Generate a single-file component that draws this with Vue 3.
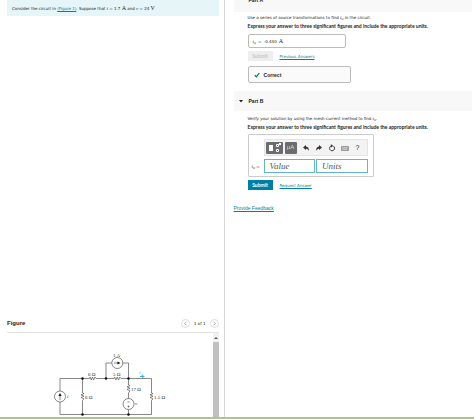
<script setup>
import { ref } from 'vue'

const value = ref('')
const units = ref('')
const open = ref(true)
</script>

<template>
  <div class="page">
    <div class="panes">
      <aside class="left">
        <p class="problem">
          Consider the circuit in <a href="#figure">(Figure 1)</a>. Suppose that <i class="m">i</i> = 1.7 <span class="m unit">A</span> and
          <i class="m">v</i> = 24 <span class="m unit">V</span>
        </p>
        <section id="figure" class="figure">
          <header class="figure-head">
            <h2>Figure</h2>
            <nav class="pager" aria-label="Figures">
              <button type="button" aria-label="Previous figure">
                <svg viewBox="0 0 8 8"><path d="M5 2 3 4l2 2" /></svg>
              </button>
              <span>1 of 1</span>
              <button type="button" aria-label="Next figure">
                <svg viewBox="0 0 8 8"><path d="M3 2l2 2-2 2" /></svg>
              </button>
            </nav>
          </header>
          <div class="figure-body">
            <svg class="circuit" viewBox="0 0 206 84" preserveAspectRatio="xMinYMin meet" role="img" aria-label="Circuit diagram">
              <g class="wire">
                <path d="M60 58V45.500H89.500M96 45.500H114M121 45.500H151.500V60M151.500 67.500V81.500H60V69" />
                <path d="M82.500 45.500V60M82.500 67.500V81.500M106 45.500V30H111.500M123 30H128.500V52M128.500 60V65.500M128.500 76.500V81.500" />
                <path d="M89.500 45.500l.6-1.500 1.200 3 1.200-3 1.200 3 1.200-3 1.100 1.500M114 45.500l.6-1.500 1.300 3 1.300-3 1.300 3 1.300-3 1.200 1.500" />
                <path d="M82.500 60l1.500.6-3 1.300 3 1.300-3 1.300 3 1.300-1.500 1.700M128.500 52l1.500.6-3 1.300 3 1.300-3 1.300 3 1.300-1.500 2.200M151.500 60l1.500.6-3 1.300 3 1.300-3 1.300 3 1.300-1.500 1.700" />
                <circle cx="60" cy="63.500" r="5.500" />
                <circle cx="117.300" cy="30" r="5.500" />
                <circle cx="128.500" cy="71" r="5.500" />
                <path d="M60 67V62M114 30H118M127.500 69H129.500M128.500 72.500V74.500M127.500 73.500H129.500" />
              </g>
              <path class="ink" d="M58.400 63l1.600-3 1.600 3zM117.500 28.400l3 1.600-3 1.600z" />
              <g class="ink">
                <circle cx="82.500" cy="45.500" r="1.300" /><circle cx="106" cy="45.500" r="1.300" />
                <circle cx="128.500" cy="45.500" r="1.300" /><circle cx="82.500" cy="81.500" r="1.300" />
                <circle cx="128.500" cy="81.500" r="1.300" />
              </g>
              <text x="113" y="24">1 A</text>
              <text x="88" y="43">6 Ω</text>
              <text x="113" y="43">5 Ω</text>
              <text x="85" y="66">6 Ω</text>
              <text x="131" y="58">17 Ω</text>
              <text x="154" y="66">1.5 Ω</text>
              <text x="67" y="65" class="it">i</text>
              <text x="135" y="72" class="it">v</text>
              <text x="139" y="41" class="it blue">i</text>
              <text x="141" y="43" class="it blue sub">o</text>
              <path class="blue" d="M140 43h2v-1l3 1.500-3 1.500v-1h-2z" />
            </svg>
            <div class="scroll"><span class="up"><svg viewBox="0 0 6 6"><path d="M1 4l2-2 2 2z" /></svg></span></div>
          </div>
        </section>
      </aside>

      <main class="right">
        <div class="part-head first"><h3>Part A</h3></div>
        <section class="part">
          <p>Use a series of source transformations to find <i class="m">i<sub>o</sub></i> in the circuit.</p>
          <p class="strong">Express your answer to three significant figures and include the appropriate units.</p>
          <div class="answer"><i class="m">i<sub>o</sub></i> = &nbsp;-0.440 <span class="m unit">A</span></div>
          <div class="actions">
            <button type="button" class="submit" disabled>Submit</button>
            <a href="#previous">Previous Answers</a>
          </div>
          <div class="correct">
            <svg viewBox="0 0 6 6"><path d="M.7 3.200 2.300 4.800 5.300 1" /></svg>
            <span>Correct</span>
          </div>
        </section>

        <div class="part-head">
          <button type="button" class="toggle" aria-label="Toggle Part B" :aria-expanded="open" @click="open = !open">
            <svg viewBox="0 0 4 4"><path d="M0 1h4L2 3.500z" /></svg>
          </button>
          <h3>Part B</h3>
        </div>
        <section v-show="open" class="part">
          <p>Verify your solution by using the mesh-current method to find <i class="m">i<sub>o</sub></i>.</p>
          <p class="strong">Express your answer to three significant figures and include the appropriate units.</p>
          <div class="editor">
            <div class="tools">
              <button type="button" class="dark" aria-label="Templates">
                <svg viewBox="0 0 17 12"><path fill="#fff" d="M3 3h4v6H3z" /><path fill="none" stroke="#fff" d="M10.500 2.500h2v2h-2zM10.500 7.500h2v2h-2z" /><path fill="#fff" d="M13 1h2v2h-2z" /></svg>
              </button>
              <button type="button" class="dark symbol">μA</button>
              <button type="button" aria-label="Undo"><svg viewBox="0 0 8 8"><path d="M1 3.500 4 1v1.600C6 2.800 7 4.200 6.800 7 6 5.200 5.200 4.700 4 4.700V6z" /></svg></button>
              <button type="button" aria-label="Redo"><svg viewBox="0 0 8 8"><path d="M7 3.500 4 1v1.600C2 2.800 1 4.200 1.200 7 2 5.200 2.800 4.700 4 4.700V6z" /></svg></button>
              <button type="button" aria-label="Reset"><svg viewBox="0 0 8 8"><path fill="none" stroke="#333" d="M3.200 1.900A2.500 2.500 0 1 0 5.500 2.200" /><path d="M2.800.3 5.300 1.700 3 3.500z" /></svg></button>
              <button type="button" aria-label="Keyboard"><svg viewBox="0 0 8 8"><path fill="#aaa" stroke="#777" stroke-width=".6" d="M.5 2.500h7v4h-7z" /><path stroke="#eee" stroke-width=".5" d="M1.500 3.700h5M2 5.300h4" /></svg></button>
              <button type="button" class="help" aria-label="Help">?</button>
            </div>
            <div class="fields">
              <label for="value"><i class="m">i<sub>o</sub></i> =</label>
              <input id="value" v-model="value" type="text" placeholder="Value">
              <input v-model="units" type="text" placeholder="Units" aria-label="Units">
            </div>
          </div>
          <div class="actions">
            <button type="button" class="submit primary">Submit</button>
            <a href="#answer">Request Answer</a>
          </div>
        </section>
        <a class="feedback" href="#feedback">Provide Feedback</a>
      </main>
    </div>
    <div class="strip"></div>
  </div>
</template>

<style>
body { margin: 0; }
</style>

<style scoped>
* { box-sizing: border-box; }
.page {
  display: flex; flex-direction: column; height: 100vh; overflow: hidden;
  font: 4px/9px "DejaVu Sans", sans-serif; color: #222; background: #fff;
}
p, h2, h3 { margin: 0; }
button, input { font: inherit; color: inherit; padding: 0; margin: 0; border: 0; background: none; }
svg { display: block; }
a { color: #007fa3; text-decoration: underline; }
.m { font-family: "Liberation Serif", serif; font-size: 5px; line-height: 1; }
.unit { font-size: 6px; }
sub { font-size: 4px; line-height: 0; vertical-align: -1px; }

.panes { flex: 1; min-height: 0; display: grid; grid-template-columns: 9fr 10fr; }
.left { display: flex; flex-direction: column; min-height: 0; padding: 0 5px 0 7px; border-right: 1px solid #d6d6de; }
.problem { padding: 4px 5px 3px; background: #e6f5f7; white-space: nowrap; }
.figure { margin-top: auto; }
.figure-head { display: flex; align-items: center; justify-content: space-between; height: 18px; border-bottom: 1px solid #e2e2e2; }
h2, h3 { font-family: "Liberation Sans", sans-serif; }
h2 { font-size: 6px; }
.pager { display: flex; align-items: center; gap: 4px; }
.pager button { width: 9px; height: 9px; border: 1px solid #ddd; border-radius: 50%; }
.pager path { fill: none; stroke: #999; stroke-width: 1; }
.figure-body { display: flex; justify-content: space-between; height: 84px; }
.circuit { flex: 1; min-width: 0; height: 84px; margin-left: -7px; }
.scroll { flex: none; width: 6px; background: #c1c1c1; }
.up { display: block; height: 9px; padding-top: 2px; background: #f1f1f1; }
.up path { fill: #555; }
.wire { fill: none; stroke: #555; stroke-width: .7; }
.ink { fill: #111; }
.circuit text { font: 5px "Liberation Serif", serif; fill: #222; }
.circuit .it { font-style: italic; }
.circuit .blue { fill: #35aee2; }
.circuit .sub { font-size: 4px; }

.right { min-width: 0; padding-left: 9px; }
.part-head { display: flex; align-items: center; gap: 6px; height: 20px; padding-left: 5px; margin-right: 2px; background: #f8f8f8; }
.part-head.first { align-items: flex-start; height: 12px; padding-left: 15px; }
.first h3 { margin-top: -4px; }
h3 { font-size: 5px; }
.toggle { width: 4px; height: 4px; }
.toggle path { fill: #222; }
.part { padding: 1px 0 0 14px; }
.part-head:not(.first) + .part { padding-top: 3px; }
.part > p { white-space: nowrap; }
.part > .strong { font: bold 5px/9px Lato, sans-serif; }
.answer { display: flex; align-items: center; gap: 2px; width: 98px; height: 14px; margin-top: 3px; padding: 0 4px; border: 1px solid #bbb; border-radius: 2px; }
.actions { display: flex; align-items: center; gap: 7px; margin-top: 3px; }
.submit { width: 25px; height: 10px; font: bold 5px/9px Lato, sans-serif; background: #eee; color: #c8c8c8; }
.primary { background: #007fa3; color: #fff; }
.correct { display: flex; align-items: center; gap: 4px; width: 103px; height: 17px; margin: 5px 0 8px; padding-left: 5px; border: 1px solid #bbb; border-radius: 2px; background: #fafafa; font: bold 5px "Liberation Sans", sans-serif; }
.correct svg { width: 6px; height: 6px; }
.correct path { fill: none; stroke: #087055; stroke-width: 1.2; }
.editor { width: 126px; height: 43px; margin-top: 2px; padding: 4px 5px 0 3px; border: 1px solid #ccc; border-radius: 1px; }
.tools { display: flex; align-items: center; gap: 5px; height: 17px; margin-left: 12px; padding: 0 1px; background: #f3f3f3; border: 1px solid #e3e3e3; }
.tools button { width: 8px; height: 8px; }
.tools button svg { width: 8px; height: 8px; fill: #333; }
.tools .dark { width: 17px; height: 12px; margin-right: -3px; background: #6c6c6c; border-radius: 1px; color: #ddd; }
.tools .dark svg { width: 17px; height: 12px; }
.tools .symbol { width: 12px; margin-right: 0; font: 6px/9px "Liberation Sans", sans-serif; }
.tools .help { font: 7px/8px "Liberation Sans", sans-serif; }
.fields { display: flex; align-items: center; gap: 1px; margin-top: 3px; }
.fields label { width: 11px; white-space: nowrap; }
.fields input { flex: 1; min-width: 0; height: 14px; padding-left: 5px; border: 1px solid #65b6cc; font: italic 9px "Liberation Serif", serif; }
.fields input::placeholder { color: #555; opacity: 1; }
.feedback { display: inline-block; margin-top: 14px; font: 5px/9px "Liberation Sans", sans-serif; }
.strip { flex: none; height: 2px; background: #a4cf70; }
</style>
